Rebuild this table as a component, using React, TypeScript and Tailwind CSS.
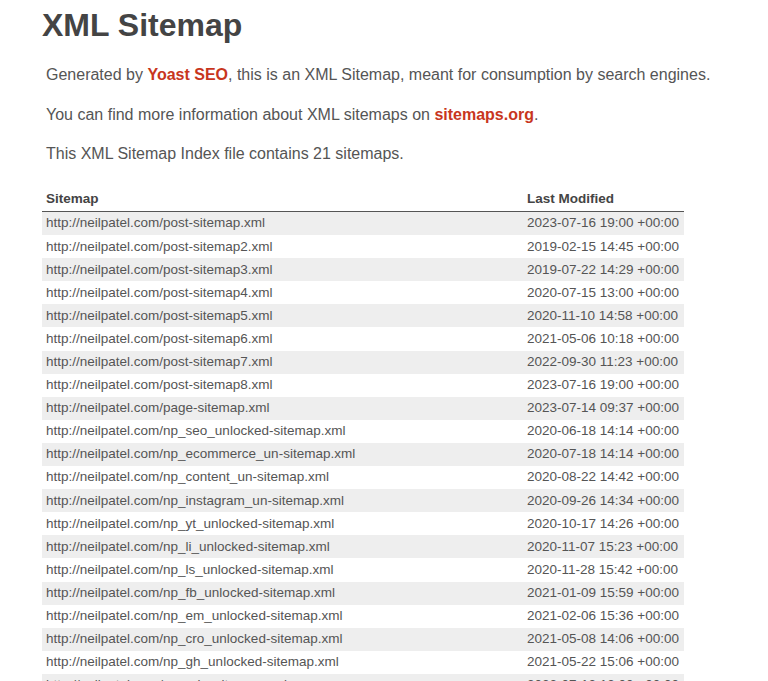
import React from "react";

const sitemaps: [string, string][] = [
  ["http://neilpatel.com/post-sitemap.xml", "2023-07-16 19:00 +00:00"],
  ["http://neilpatel.com/post-sitemap2.xml", "2019-02-15 14:45 +00:00"],
  ["http://neilpatel.com/post-sitemap3.xml", "2019-07-22 14:29 +00:00"],
  ["http://neilpatel.com/post-sitemap4.xml", "2020-07-15 13:00 +00:00"],
  ["http://neilpatel.com/post-sitemap5.xml", "2020-11-10 14:58 +00:00"],
  ["http://neilpatel.com/post-sitemap6.xml", "2021-05-06 10:18 +00:00"],
  ["http://neilpatel.com/post-sitemap7.xml", "2022-09-30 11:23 +00:00"],
  ["http://neilpatel.com/post-sitemap8.xml", "2023-07-16 19:00 +00:00"],
  ["http://neilpatel.com/page-sitemap.xml", "2023-07-14 09:37 +00:00"],
  ["http://neilpatel.com/np_seo_unlocked-sitemap.xml", "2020-06-18 14:14 +00:00"],
  ["http://neilpatel.com/np_ecommerce_un-sitemap.xml", "2020-07-18 14:14 +00:00"],
  ["http://neilpatel.com/np_content_un-sitemap.xml", "2020-08-22 14:42 +00:00"],
  ["http://neilpatel.com/np_instagram_un-sitemap.xml", "2020-09-26 14:34 +00:00"],
  ["http://neilpatel.com/np_yt_unlocked-sitemap.xml", "2020-10-17 14:26 +00:00"],
  ["http://neilpatel.com/np_li_unlocked-sitemap.xml", "2020-11-07 15:23 +00:00"],
  ["http://neilpatel.com/np_ls_unlocked-sitemap.xml", "2020-11-28 15:42 +00:00"],
  ["http://neilpatel.com/np_fb_unlocked-sitemap.xml", "2021-01-09 15:59 +00:00"],
  ["http://neilpatel.com/np_em_unlocked-sitemap.xml", "2021-02-06 15:36 +00:00"],
  ["http://neilpatel.com/np_cro_unlocked-sitemap.xml", "2021-05-08 14:06 +00:00"],
  ["http://neilpatel.com/np_gh_unlocked-sitemap.xml", "2021-05-22 15:06 +00:00"],
  ["http://neilpatel.com/np_ads_sitemap.xml", "2022-07-13 13:00 +00:00"],
];

const App = () => {
  return (
    <div
      className="min-h-screen bg-white pl-[42px] pt-[9px]"
      style={{ fontFamily: '"Liberation Sans", Arial, sans-serif' }}
    >
      <h1 className="text-[32px] leading-8 font-bold text-[#444]">XML Sitemap</h1>

      {/* Explanation */}
      <div className="mt-[22px] flex flex-col gap-[15.5px] pl-1 text-[16px] leading-6 text-[#555]">
        <p>
          Generated by{" "}
          <a href="#" className="font-bold text-[#c8361d]">
            Yoast SEO
          </a>
          , this is an XML Sitemap, meant for consumption by search engines.
        </p>
        <p>
          You can find more information about XML sitemaps on{" "}
          <a href="#" className="font-bold text-[#c8361d]">
            sitemaps.org
          </a>
          .
        </p>
        <p>This XML Sitemap Index file contains 21 sitemaps.</p>
      </div>

      {/* Table */}
      <div className="mt-[20px] w-[642px] text-[13.5px]">
        <div className="grid grid-cols-[481px_1fr] border-b border-[#555] pt-1 pb-1 leading-[17px] font-bold text-[#444]">
          <div className="pl-1">Sitemap</div>
          <div className="pl-1">Last Modified</div>
        </div>
        {sitemaps.map(([url, date], i) => (
          <div
            key={url}
            className={`grid h-[23.1px] grid-cols-[481px_1fr] items-center text-[#555] ${
              i % 2 === 0 ? "bg-[#eeeeee]" : "bg-white"
            }`}
          >
            <div className="pl-1">{url}</div>
            <div className="pl-1">{date}</div>
          </div>
        ))}
      </div>
    </div>
  );
};

export default App;
